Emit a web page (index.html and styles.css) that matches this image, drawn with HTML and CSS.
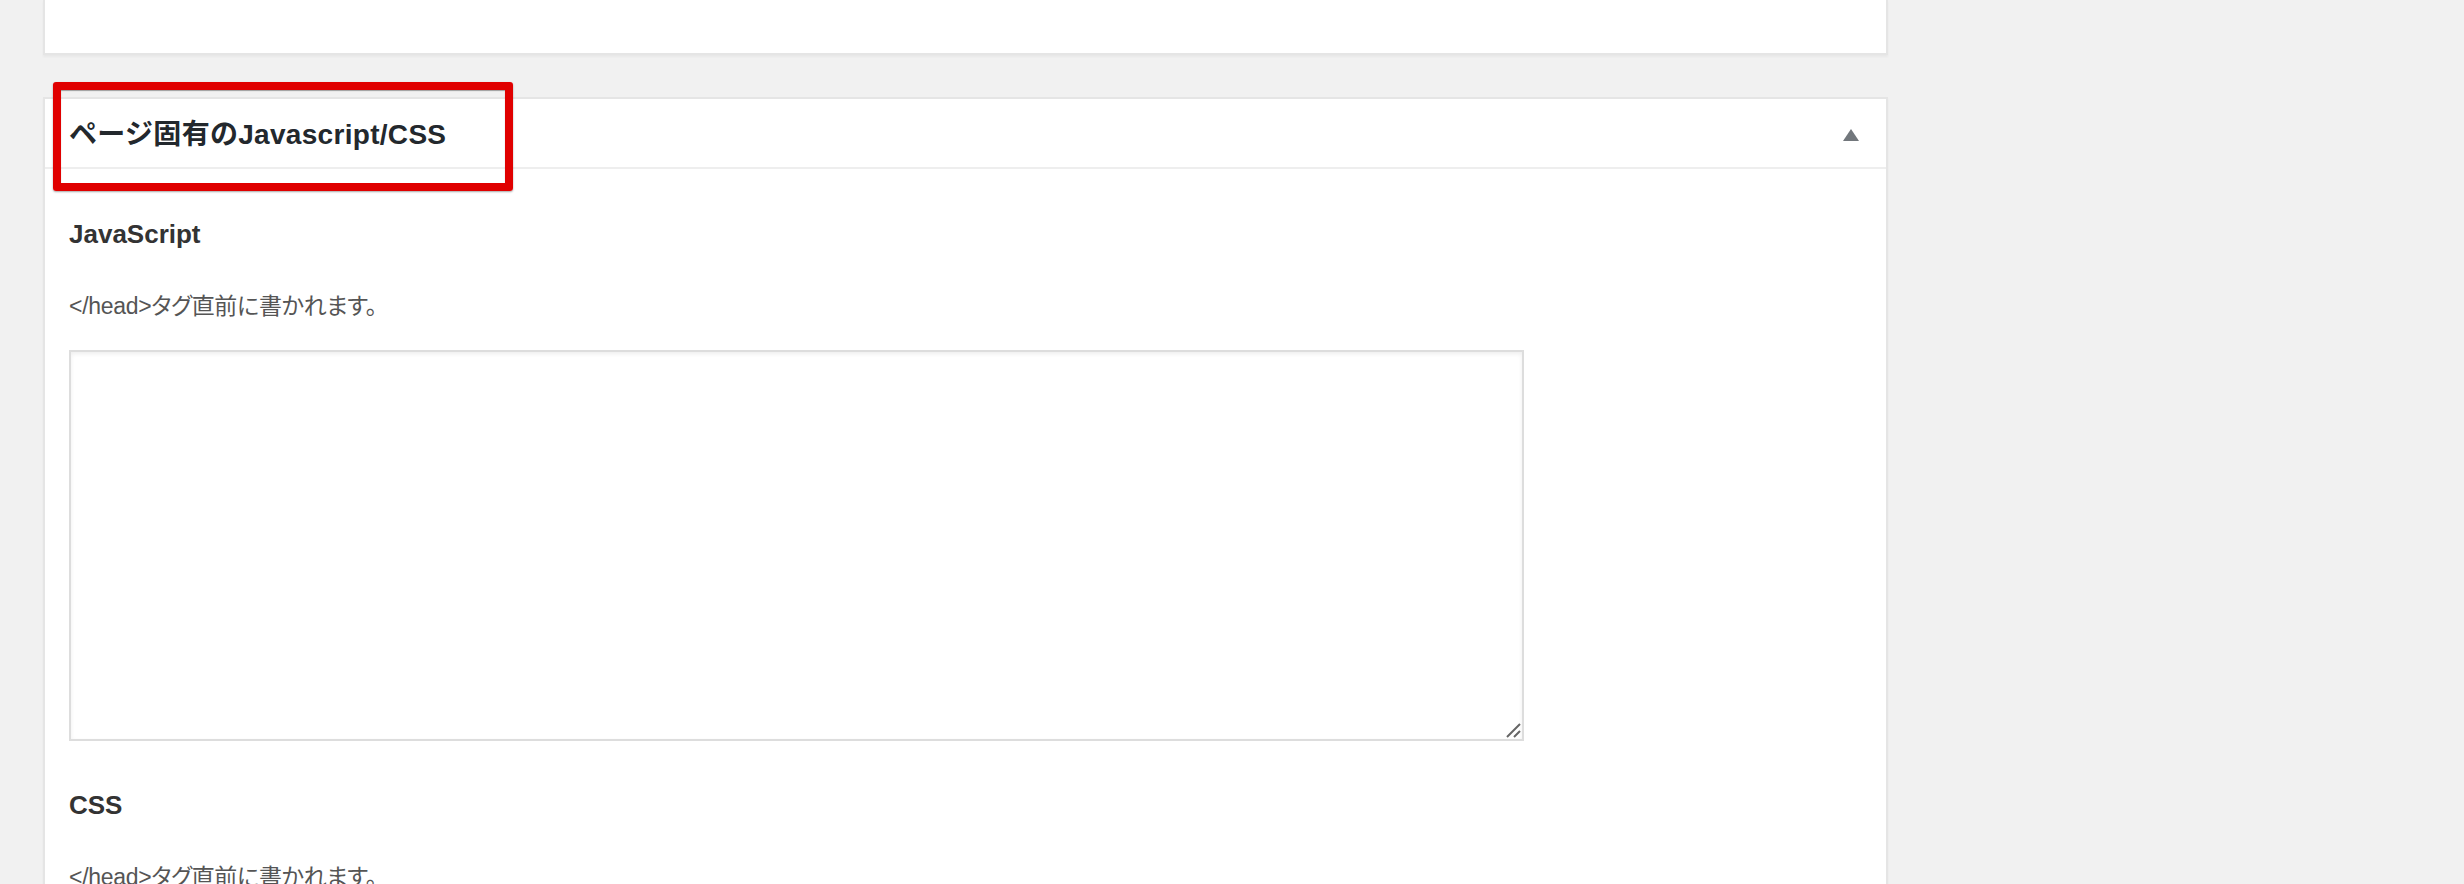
FILE: index.html
```html
<!DOCTYPE html>
<html lang="ja">
<head>
    <meta charset="UTF-8">
    <title>ページ固有のJavascript/CSS</title>
    <link rel="stylesheet" href="styles.css">
</head>
<body>
    <div class="wrap">
        <!-- 上のボックス（途中まで表示） -->
        <div class="postbox postbox-prev"></div>

        <!-- ページ固有のJavascript/CSS -->
        <div class="postbox">
            <div class="hndle">
                <h2 class="hndle-title">ページ固有のJavascript/CSS</h2>
                <span class="toggle-indicator"></span>
            </div>
            <div class="inside">
                <h3 class="field-title">JavaScript</h3>
                <p class="description">&lt;/head&gt;タグ直前に書かれます。</p>
                <div class="textarea-wrap">
                    <textarea class="code-area"></textarea>
                    <svg class="grip" width="16" height="16" viewBox="0 0 16 16">
                        <path d="M2 15 L15 2 M9 15 L15 9" stroke="#666" stroke-width="2" fill="none"/>
                    </svg>
                </div>

                <h3 class="field-title field-title-css">CSS</h3>
                <p class="description">&lt;/head&gt;タグ直前に書かれます。</p>
            </div>

            <!-- 注釈の赤枠 -->
            <div class="annotation"></div>
        </div>
    </div>
</body>
</html>
```

FILE: styles.css
```css
body {
    margin: 0;
    background-color: #f1f1f1;
    font-family: "Liberation Sans", "Noto Sans CJK JP", sans-serif;
    color: #444;
    overflow: hidden;
}

.wrap {
    width: 1845px;
    margin-left: 43px;
}

.postbox {
    position: relative;
    background-color: #fff;
    border: 2px solid #e5e5e5;
    box-shadow: 0 2px 2px rgba(0,0,0,0.04);
    box-sizing: border-box;
}

.postbox-prev {
    height: 55px;
    border-top: none;
    margin-bottom: 42px;
}

/* ヘッダー */
.hndle {
    display: flex;
    justify-content: space-between;
    align-items: center;
    padding: 16px 24px 12px 24px;
    border-bottom: 2px solid #eee;
}

.hndle-title {
    margin: 0;
    font-size: 28px;
    line-height: 40px;
    font-weight: bold;
    letter-spacing: 0.3px;
    color: #23282d;
}

.toggle-indicator {
    width: 0;
    height: 0;
    margin-right: 3px;
    border-left: 8px solid transparent;
    border-right: 8px solid transparent;
    border-bottom: 12px solid #72777c;
}

/* 中身 */
.inside {
    padding: 0 24px 40px 24px;
}

.field-title {
    margin: 47px 0 0 0;
    font-size: 26px;
    line-height: 36px;
    font-weight: bold;
    color: #333;
}

.field-title-css {
    margin-top: 46px;
}

.description {
    margin: 37px 0 0 0;
    font-size: 23px;
    line-height: 34px;
    letter-spacing: -0.3px;
    color: #555;
    font-feature-settings: "palt";
}

.textarea-wrap {
    position: relative;
    width: 1455px;
    height: 391px;
    margin-top: 27px;
}

.code-area {
    display: block;
    width: 100%;
    height: 100%;
    margin: 0;
    box-sizing: border-box;
    border: 2px solid #ddd;
    box-shadow: inset 0 2px 4px rgba(0,0,0,0.07);
    resize: none;
    outline: none;
    background-color: #fff;
}

.grip {
    position: absolute;
    right: 3px;
    bottom: 3px;
}

/* 赤枠 */
.annotation {
    position: absolute;
    left: 8px;
    top: -17px;
    width: 460px;
    height: 109px;
    box-sizing: border-box;
    border: 8px solid #e00000;
    border-radius: 3px;
    box-shadow: 0 1px 2px rgba(0,0,0,0.35), inset 0 1px 1px rgba(0,0,0,0.35);
}
```
